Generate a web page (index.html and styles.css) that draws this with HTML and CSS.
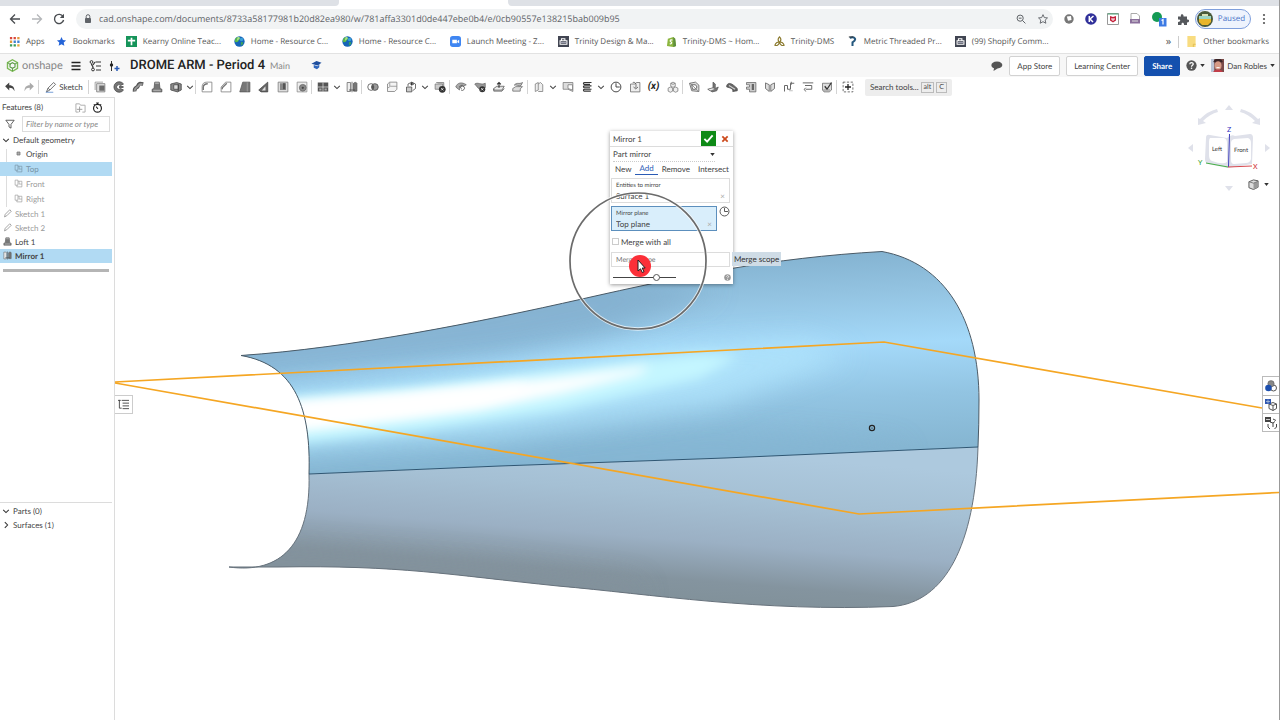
FILE: index.html
```html
<!DOCTYPE html>
<html lang="en">
<head>
  <meta charset="UTF-8">
  <meta name="viewport" content="width=device-width, initial-scale=1.0">
  <title>DROME ARM - Period 4</title>
  <link rel="stylesheet" href="styles.css">
</head>
<body>

  <!-- Shared icons -->
  <svg class="sprite" aria-hidden="true">
    <symbol id="i-chev" viewBox="0 0 10 10"><path d="M1.500 3.500 5 7l3.500-3.500" fill="none" stroke="currentColor" stroke-width="1.300"/></symbol>
    <symbol id="i-caret" viewBox="0 0 6 4"><path d="M0 0h6L3 4z" fill="currentColor"/></symbol>
    <symbol id="i-undo" viewBox="0 0 16 16"><path d="M7 2v3.500c5 0 7 3 7 8C12.500 10.500 11 9 7 9v3.500L1.500 7z" fill="currentColor"/></symbol>
    <symbol id="i-pencil" viewBox="0 0 16 16"><path d="M2 14.500 4 9.500 11.500 2 14 4.500 6.500 12z M4 9.500 6.500 12" fill="#fff" stroke="currentColor"/><path d="M1 15h10" stroke="#4a7fc8"/></symbol>
    <symbol id="i-extrude" viewBox="0 0 16 16"><path d="M1.500 12V1.500H12" fill="none" stroke="#888"/><path d="M3.500 3.500h11v11h-11z" fill="#ddd" stroke="#777"/><path d="M7 6h7v7H7z" fill="#6b6b6b"/></symbol>
    <symbol id="i-revolve" viewBox="0 0 16 16"><path d="M14 4A7 7 0 1 0 14 12L10 10A3 3 0 1 1 10 6z" fill="#777" stroke="#444"/><path d="M8 8h6" stroke="#333" stroke-width="2"/></symbol>
    <symbol id="i-sweep" viewBox="0 0 16 16"><path d="M3.500 14C3 7 7 10 8 6.500S10 3 15 4" fill="none" stroke="#555" stroke-width="5"/><path d="M3.500 13C4 8 7 9 8.500 6.500S10 4 14 4.300" fill="none" stroke="#999" stroke-width="2.500"/></symbol>
    <symbol id="i-loft" viewBox="0 0 16 16"><path d="M5 1.500h6l1 8.500 2.500 1v3.500h-13V11L4 10z" fill="#777" stroke="#555"/><path d="M5.500 2h5v2h-5zM3 11.500h10v2H3z" fill="#aaa"/></symbol>
    <symbol id="i-thicken" viewBox="0 0 16 16"><path d="M1 4 9 2l6 2v8l-5 2.500L1 12z" fill="#888" stroke="#444"/><path d="M5 5h6v6H5z" fill="#ddd" stroke="#444"/><path d="M11 4.500v9" stroke="#333"/></symbol>
    <symbol id="i-fillet" viewBox="0 0 16 16"><path d="M1.500 14.500V7Q2 1.500 8 1.500h6.500v13z" fill="#fff" stroke="#777"/><path d="M3 12V8Q3.500 3.500 9 3.500" fill="none" stroke="#777" stroke-width="2"/></symbol>
    <symbol id="i-chamfer" viewBox="0 0 16 16"><path d="M1.500 14.500V8l6-6.500h7v13z" fill="#fff" stroke="#777"/><path d="M3 11V9l6-6" fill="none" stroke="#777" stroke-width="2"/></symbol>
    <symbol id="i-draft" viewBox="0 0 16 16"><path d="M5 1.500h9.500v13H1z" fill="#777" stroke="#555"/><path d="M11 2v12" stroke="#aaa"/></symbol>
    <symbol id="i-rib" viewBox="0 0 16 16"><path d="M1 12 13 1.500v13H4z" fill="#666" stroke="#444"/><path d="M5 12.500 10 7v5.500z" fill="#ddd"/></symbol>
    <symbol id="i-shell" viewBox="0 0 16 16"><path d="M1.500 1.500h13v13h-13z" fill="#ddd" stroke="#777"/><path d="M4 3h8v9H4z" fill="#888"/><path d="M8 3h3v8H8z" fill="#555"/></symbol>
    <symbol id="i-hole" viewBox="0 0 16 16"><path d="M1.500 1.500h13v13h-13z" fill="#eee" stroke="#888"/><circle cx="9" cy="9" r="4.500" fill="#888" stroke="#666"/><circle cx="9" cy="9" r="1.500" fill="#444"/></symbol>
    <symbol id="i-pattern" viewBox="0 0 16 16"><path d="M1 2h14v12H1z" fill="#555"/><path d="M8 2v12M1 8h14" stroke="#ddd"/><path d="M3 10h3v2.500H3zM10 10h3v2.500h-3z" fill="#aaa"/></symbol>
    <symbol id="i-mirror" viewBox="0 0 16 16"><path d="M1.500 2H6v12H1.500z" fill="#eee" stroke="#666"/><path d="M10 3c2-2 4-1 4.500 0v10.500H10z" fill="#777" stroke="#555"/><path d="M8 1v14" stroke="#444"/><path d="M4 12h8" stroke="#444"/></symbol>
    <symbol id="i-boolean" viewBox="0 0 16 16"><circle cx="5.500" cy="8" r="4.500" fill="#fff" stroke="#444"/><circle cx="10.500" cy="8" r="4.500" fill="#999" stroke="#444"/><path d="M8 4.500a4.500 4.500 0 0 1 0 7 4.500 4.500 0 0 1 0-7z" fill="#555"/></symbol>
    <symbol id="i-split" viewBox="0 0 16 16"><path d="M2 4 5 1.500h9.500V11l-3 3H2z" fill="#f4f4f4" stroke="#777"/><path d="M2 9.500 6 7h8.500M5 2v5" fill="none" stroke="#888"/></symbol>
    <symbol id="i-transform" viewBox="0 0 16 16"><path d="M2 8h7v6.500H2z" fill="#ccc" stroke="#444"/><path d="M4 7V4l5-2.500L14 4v6l-4 3" fill="none" stroke="#444"/><path d="M9 1.500V6M7 4h5" stroke="#222" stroke-width="1.500"/></symbol>
    <symbol id="i-delete" viewBox="0 0 16 16"><path d="M1.500 4h10v7h-10zM3 2h10v7" fill="#ccc" stroke="#777"/><circle cx="11" cy="11" r="4.500" fill="#333"/><path d="m9.500 9.500 3 3m0-3-3 3" stroke="#fff"/></symbol>
    <symbol id="i-modfillet" viewBox="0 0 16 16"><path d="M1 8C3 2 9 1 15 5l-4 2c-3-1-5 1-5 5z" fill="#aaa" stroke="#666"/><path d="M8 12a3 3 0 1 0 0-5M9 5l-3 3 3 2" fill="none" stroke="#444"/></symbol>
    <symbol id="i-delface" viewBox="0 0 16 16"><path d="M1 4c4-3 9 2 14-1v6L6 10z" fill="#999" stroke="#666"/><circle cx="11" cy="11" r="4" fill="#333"/><path d="m9.500 9.500 3 3m0-3-3 3" stroke="#fff"/></symbol>
    <symbol id="i-moveface" viewBox="0 0 16 16"><path d="M1 10 5 7h10l-3 5H1zM1 10v3.500h11L15 10" fill="#ddd" stroke="#555"/><path d="M8 9V2M5.500 4.500 8 2l2.500 2.500" fill="none" stroke="#333" stroke-width="1.500"/></symbol>
    <symbol id="i-replace" viewBox="0 0 16 16"><path d="M1 13.500V10l4-2.500h9l-3 3v3z" fill="#ddd" stroke="#666"/><path d="M3 5.500C7 1 9 5 14 2l-2 4C9 8 6 4 3 5.500z" fill="#bbb" stroke="#666"/></symbol>
    <symbol id="i-plane" viewBox="0 0 16 16"><path d="M3 14V4l4-2v10zM7 4l3-2 3 3v9H7" fill="#eee" stroke="#777"/></symbol>
    <symbol id="i-frame" viewBox="0 0 16 16"><path d="M1.500 2h13v12L8 11H1.500z" fill="#ddd" stroke="#777"/><path d="M8 5h6v7l-6-2z" fill="#fff" stroke="#777"/></symbol>
    <symbol id="i-helix" viewBox="0 0 16 16"><path d="M14 2H5Q2 2.500 4 4.500h8M14 6.500H5Q2 7 4 9h8M14 11H5Q2 11.500 4 13.500h9" fill="none" stroke="#333" stroke-width="1.500"/></symbol>
    <symbol id="i-clock" viewBox="0 0 16 16"><circle cx="8" cy="8" r="6.500" fill="#fff" stroke="currentColor" stroke-width="1.300"/><path d="M8 3v5h5" fill="none" stroke="currentColor" stroke-width="1.300"/></symbol>
    <symbol id="i-import" viewBox="0 0 16 16"><path d="M2 4h6l2-2h4.500v12.500H2z" fill="#eee" stroke="#666"/><path d="M5 2c4-1 5 2 4 7M6 8l3 2.500L12 8" fill="none" stroke="#444"/></symbol>
    <symbol id="i-composite" viewBox="0 0 16 16"><path d="M8 1.500 11 3v4L8 8.500 5 7V3zM4.500 8l3 1.500v4l-3 1.500-3-1.500v-4zM11.500 8l3 1.500v4l-3 1.500-3-1.500v-4z" fill="#eee" stroke="#777"/><path d="m5 3 3 1.500L11 3" fill="none" stroke="#777"/></symbol>
    <symbol id="i-sheet" viewBox="0 0 16 16"><path d="M2 3 10 1.500l4.500 4V14L5 13z" fill="#ddd" stroke="#555"/><path d="M5 5h5l2 3-2 3H6z" fill="#fff" stroke="#444"/><path d="m3 3 10 10" stroke="#777"/></symbol>
    <symbol id="i-flange" viewBox="0 0 16 16"><path d="M8 1.500 11 4v6l4-2-2 5-6 1.500L1 11l7-2z" fill="#777" stroke="#555"/><path d="m2 11 6-1.500 2 1-5 2z" fill="#eee"/></symbol>
    <symbol id="i-hem" viewBox="0 0 16 16"><path d="M1 6c2-5 7-3 14 4v3L9 14C10 10 5 9 1 8z" fill="#666" stroke="#444"/><path d="m4 6 8 5" stroke="#ccc" stroke-width="1.500"/></symbol>
    <symbol id="i-tab" viewBox="0 0 16 16"><path d="M2 2h12.500v12.500H6V11H2V8h4V5H2z" fill="#ccc" stroke="#666"/><path d="M9 4h3v8H9z" fill="#666"/></symbol>
    <symbol id="i-bend" viewBox="0 0 16 16"><path d="M2 2.500 7 5v9L2 10zM14 2.500 9 5v9l5-4z" fill="#ddd" stroke="#555"/></symbol>
    <symbol id="i-joint" viewBox="0 0 16 16"><path d="M2 14V6h4v5h4V3h5M11 1v4" fill="none" stroke="#666" stroke-width="1.300"/><path d="M8 13h5" stroke="#aaa"/></symbol>
    <symbol id="i-relief" viewBox="0 0 16 16"><path d="M1 2.500h14M4 6h9v5H5M5 9l-2 2 2 3" fill="none" stroke="#666" stroke-width="1.300"/></symbol>
    <symbol id="i-finish" viewBox="0 0 16 16"><path d="M2 3h12v9l-3 2.500H4L2 12z" fill="#ddd" stroke="#666"/><path d="m5 7 3 4 6-9" fill="none" stroke="#333" stroke-width="1.700"/><path d="M3 12h9" stroke="#777"/></symbol>
    <symbol id="i-add" viewBox="0 0 16 16"><path d="M1.500 1.500h13v13h-13z" fill="none" stroke="#444" stroke-dasharray="3 2"/><path d="M8 4v8M4 8h8" stroke="#222" stroke-width="1.700"/></symbol>
    <symbol id="i-planeface" viewBox="0 0 16 16"><path d="M2 2h5v9H2zM7 4h7v10H5v-3M9 4v5h5" fill="none" stroke="currentColor" stroke-width="1.200"/></symbol>
    <symbol id="i-globe" viewBox="0 0 16 16"><circle cx="8" cy="8" r="7.500" fill="#1565b8"/><path d="M4 2c4-2 6 1 4 3s-2 4-5 4C0 8 1 4 4 2z" fill="#58b947"/><path d="M5 2c2-1 4 0 3 2s-3 2-4 3z" fill="#a6dc8c"/><path d="M10 9c3-1 4 0 3 3l-3 2z" fill="#3aa060"/><circle cx="11" cy="5" r="2.500" fill="#3aa0d8"/></symbol>
    <symbol id="i-shop" viewBox="0 0 16 16"><path d="M0 0h16v16H0z" fill="#414552"/><path d="M3 7h10v5H3zM5 7V4h5v3" fill="none" stroke="#fff" stroke-width="1.500"/><path d="M4 9.500h8" stroke="#ccd"/></symbol>
    <symbol id="i-help" viewBox="0 0 16 16"><circle cx="8" cy="8" r="7.500" fill="currentColor"/><path d="M5.500 6.200C5.500 2.800 10.700 3 10.500 6 10.400 7.600 8 7.800 8 9.700" fill="none" stroke="#fff" stroke-width="1.800"/><circle cx="8" cy="12" r="1.200" fill="#fff"/></symbol>
  </svg>

  <!-- Browser chrome -->
  <div class="tabstrip"><div class="tabstrip-rest"></div><div class="tabstrip-active"></div><div class="tabstrip-rest tabstrip-end"></div></div>

  <div class="navbar">
    <button class="nav-btn" aria-label="Back"><svg viewBox="0 0 12 12"><path d="M11 6H1.500M6 1.500 1.500 6 6 10.500" fill="none" stroke="#4a4d51" stroke-width="1.300"/></svg></button>
    <button class="nav-btn" aria-label="Forward"><svg viewBox="0 0 12 12"><path d="M1 6h9.500M6 1.500 10.500 6 6 10.500" fill="none" stroke="#b4b6b9" stroke-width="1.300"/></svg></button>
    <button class="nav-btn" aria-label="Reload"><svg viewBox="0 0 12 12"><path d="M10 3.500A4.600 4.600 0 1 0 10.600 7" fill="none" stroke="#4a4d51" stroke-width="1.400"/><path d="M11 .8V5H6.800z" fill="#4a4d51"/></svg></button>
    <div class="omnibox">
      <svg class="lock" viewBox="0 0 8 10"><path d="M1.500 4.500h5v4h-5z" fill="#5f6368" stroke="#5f6368"/><path d="M2.200 4V2.500a1.800 1.800 0 0 1 3.600 0V4" fill="none" stroke="#5f6368"/></svg>
      <input class="url" aria-label="Address" value="cad.onshape.com/documents/8733a58177981b20d82ea980/w/781affa3301d0de447ebe0b4/e/0cb90557e138215bab009b95">
      <svg class="icon-10" viewBox="0 0 12 12"><circle cx="5" cy="5" r="3.700" fill="none" stroke="#5f6368" stroke-width="1.200"/><path d="m7.800 7.800 3.500 3.500M3.300 5h3.400" stroke="#5f6368" stroke-width="1.200"/></svg>
      <svg class="icon-10" viewBox="0 0 12 12"><path d="m6 .8 1.600 3.500 3.800.4-2.800 2.600.8 3.800L6 9.200l-3.400 1.900.8-3.800L.6 4.700l3.800-.4z" fill="none" stroke="#5f6368" stroke-width="1.100"/></svg>
    </div>
    <div class="extensions">
      <svg class="icon-12" viewBox="0 0 12 12"><circle cx="6" cy="6" r="4.700" fill="#777"/><path d="M3.800 3.500 8 3l.5 4-3.500.8z" fill="#fff"/></svg>
      <svg class="icon-12" viewBox="0 0 12 12"><circle cx="6" cy="6" r="5.800" fill="#30309a"/><path d="M4.300 3v6M8.500 3 5 6l3 3" fill="none" stroke="#fff" stroke-width="1.500"/></svg>
      <svg class="icon-12" viewBox="0 0 12 12"><path d="M.5.500h11v11H.5z" fill="#fff" stroke="#999"/><path d="M.5 1h11" stroke="#4ca878"/><path d="m3 3 3 1 3-1v4.500L6 9.500l-3-2z" fill="#c3213a"/><path d="M5 5v2h2V5" fill="none" stroke="#fff"/></svg>
      <svg class="icon-12" viewBox="0 0 12 12"><path d="M2 .5h6l2.500 2.500v5H2z" fill="#fff" stroke="#aaa"/><path d="M1 6h10v4.500H1z" fill="#8b6f9c"/><path d="M3 8h6" stroke="#ddd"/></svg>
      <svg class="icon-16" viewBox="0 0 16 16"><circle cx="6" cy="6" r="5" fill="#149a55"/><path d="M8 7h7.500v8.500H8z" fill="#3c7ae4"/><path d="m10.500 9.500 1.500-1v5" fill="none" stroke="#fff" stroke-width="1.200"/></svg>
      <svg class="icon-12" viewBox="0 0 12 12"><path d="M1 3.500h3C3 .5 7 .5 6.500 3.500H10v3c3-.5 3 3 0 3V12H7c.3-3-3-3-2.500 0H1V9c3 0 3-3 0-2.500z" fill="#55585c"/></svg>
    </div>
    <button class="profile">
      <svg viewBox="0 0 16 16"><circle cx="8" cy="8" r="8" fill="#4a5a3a"/><path d="M2 7h12v4l-3 3H5l-3-3z" fill="#e8b52c"/><path d="M2 5h12v3H2z" fill="#9ad3c4"/><path d="M5 3h6v2H5z" fill="#d7dfb5"/></svg>
      Paused
    </button>
    <button class="dots" aria-label="Menu"><svg viewBox="0 0 4 12"><circle cx="2" cy="2" r="1.100"/><circle cx="2" cy="6" r="1.100"/><circle cx="2" cy="10" r="1.100"/></svg></button>
  </div>

  <nav class="bookmarks">
    <a href="#"><svg viewBox="0 0 12 12"><path d="M1 1h2.500v2.500H1zM5 1h2.500v2.500H5z" fill="#d9473a"/><path d="M9 1h2.500v2.500H9zM1 5h2.500v2.500H1z" fill="#e2973a"/><path d="M5 5h2.500v2.500H5zM9 5h2.500v2.500H9z" fill="#4080d0"/><path d="M1 9h2.500v2.500H1zM5 9h2.500v2.500H5z" fill="#3a9c5a"/><path d="M9 9h2.500v2.500H9z" fill="#e3a83a"/></svg>Apps</a>
    <a href="#"><svg viewBox="0 0 12 12"><path d="m6 1.200 1.500 3.200 3.500.4-2.600 2.400.7 3.500L6 9 2.900 10.700l.7-3.500L1 4.800l3.500-.4z" fill="#2464d8"/></svg>Bookmarks</a>
    <a href="#" class="long"><svg viewBox="0 0 12 12"><path d="M0 0h12v12H0z" fill="#16945a"/><path d="M6 2v8M2 5h8" stroke="#fff" stroke-width="1.800"/></svg>Kearny Online Teac...</a>
    <a href="#" class="long"><svg><use href="#i-globe"/></svg>Home - Resource C...</a>
    <a href="#" class="long"><svg><use href="#i-globe"/></svg>Home - Resource C...</a>
    <a href="#" class="long"><svg viewBox="0 0 12 12"><rect width="12" height="12" rx="3" fill="#3f86f2"/><path d="M2.500 4h5v4h-5zM8 5.500 10 4v4L8 6.800z" fill="#fff"/></svg>Launch Meeting - Z...</a>
    <a href="#" class="long"><svg><use href="#i-shop"/></svg>Trinity Design &amp; Ma...</a>
    <a href="#" class="long"><svg viewBox="0 0 12 12"><path d="m2 3 6-2 2 2 1 8-3 1-7-1z" fill="#8cb63f"/><path d="m8 1 2 2 1 8-3 1z" fill="#5e8e3e"/><path d="M7 4.500C4 3.500 4 6 5.500 6.500S6 9 4 8.500" fill="none" stroke="#fff" stroke-width="1.200"/></svg>Trinity-DMS ~ Hom...</a>
    <a href="#" class="mid"><svg viewBox="0 0 12 12"><path d="M6 1c2 2 2 4 0 6-2-2-2-4 0-6zM1 10c1-3 3-4 5-3-1 3-3 4-5 3zM11 10c-1-3-3-4-5-3 1 3 3 4 5 3z" fill="none" stroke="#8b7a2e" stroke-width="1.300"/></svg>Trinity-DMS</a>
    <a href="#" class="long"><svg viewBox="0 0 12 12"><path d="M3 2c6-2 8 2 3 5v4" fill="none" stroke="#25587e" stroke-width="2.200"/><path d="M2 1h5" stroke="#333"/></svg>Metric Threaded Pr...</a>
    <a href="#" class="long"><svg><use href="#i-shop"/></svg>(99) Shopify Comm...</a>
    <span class="more">»</span>
    <a href="#" class="other"><svg viewBox="0 0 12 12"><path d="M1.500 0h9v12h-9z" fill="#f8dc80"/><path d="M8 12V9h2.500" fill="none" stroke="#e0bd50"/></svg>Other bookmarks</a>
  </nav>

  <!-- Document header -->
  <header class="doc-header">
    <a class="brand" href="#"><svg viewBox="0 0 14 14"><path d="m7 .8 5.400 3.100v6.200L7 13.200l-5.400-3.100V3.900z" fill="none" stroke="#7dba57" stroke-width="1.500"/><path d="m7 4 2.700 1.500v3L7 10 4.300 8.500v-3z" fill="none" stroke="#5a9a44" stroke-width="1.200"/><path d="M1.600 4 5 6M7 13v-3m5.400-6L9.500 5.500" stroke="#5a9a44"/></svg>onshape</a>
    <button class="head-btn" aria-label="Menu"><svg viewBox="0 0 12 12"><path d="M1.500 2.500h9M1.500 6h9M1.500 9.500h9" stroke="#222" stroke-width="1.400"/></svg></button>
    <button class="head-btn" aria-label="Versions"><svg viewBox="0 0 12 12"><circle cx="2.500" cy="2" r="1.400" fill="none" stroke="#333"/><circle cx="4" cy="9.500" r="1.400" fill="none" stroke="#333"/><path d="M2.500 4c0 2 1.500 1 1.500 4M4 5l2-3M6.500 2H12M7 6h5M7 10h5" fill="none" stroke="#333" stroke-width="1.200"/></svg></button>
    <button class="head-btn" aria-label="Insert"><svg viewBox="0 0 12 12"><path d="M3.500 1v10" stroke="#333"/><circle cx="3.500" cy="5" r="1.700" fill="#222"/><path d="M9 6v5M6.500 8.500h5" stroke="#2a5bb5" stroke-width="1.500"/></svg></button>
    <h1>DROME ARM - Period 4</h1>
    <span class="branch">Main</span>
    <svg class="edu" viewBox="0 0 12 12"><path d="M.5 4 6 1l5.500 2L7 6z" fill="#1f4f9f"/><path d="M3 5.500v3L6.500 10 9 8V5L7 6.800z" fill="#2f66bd"/><path d="M3.500 3.500 9 4.500" stroke="#1f4f9f"/></svg>
    <div class="head-right">
      <svg class="icon-12" viewBox="0 0 12 12"><path d="M6 1.500c7 0 7 7 .5 7L2.500 11 3 8.200C-1.500 6.500 0 1.500 6 1.500z" fill="#555"/></svg>
      <button class="btn">App Store</button>
      <button class="btn">Learning Center</button>
      <button class="btn btn-primary">Share</button>
      <button class="user"><svg class="icon-11 grey"><use href="#i-help"/></svg><svg class="caret"><use href="#i-caret"/></svg></button>
      <button class="user"><svg class="avatar" viewBox="0 0 12 12"><path d="M0 0h12v12H0z" fill="#7a4a48"/><path d="M0 0h3v12H0z" fill="#b9c4d6"/><ellipse cx="6.500" cy="6" rx="3.200" ry="4" fill="#d59a86"/><path d="M3 3c1-3 6-3 7 0" stroke="#3a2527" stroke-width="2" fill="none"/><path d="M2 12c2-3 7-3 9 0z" fill="#c23d48"/><path d="M5 8h3" stroke="#fff"/></svg>Dan Robles<svg class="caret"><use href="#i-caret"/></svg></button>
    </div>
  </header>

  <div class="toolbar">
    <button class="tool" aria-label="Undo"><svg><use href="#i-undo"/></svg></button>
    <button class="tool redo" aria-label="Redo"><svg><use href="#i-undo"/></svg></button>
    <span class="sep"></span>
    <button class="tool-sketch"><svg><use href="#i-pencil"/></svg>Sketch</button>
    <span class="sep"></span>
    <button class="tool" aria-label="Extrude"><svg><use href="#i-extrude"/></svg></button>
    <button class="tool" aria-label="Revolve"><svg><use href="#i-revolve"/></svg></button>
    <button class="tool" aria-label="Sweep"><svg><use href="#i-sweep"/></svg></button>
    <button class="tool" aria-label="Loft"><svg><use href="#i-loft"/></svg></button>
    <button class="tool" aria-label="Thicken"><svg><use href="#i-thicken"/></svg></button>
    <button class="drop" aria-label="More solids"><svg><use href="#i-chev"/></svg></button>
    <span class="sep"></span>
    <button class="tool" aria-label="Fillet"><svg><use href="#i-fillet"/></svg></button>
    <button class="tool" aria-label="Chamfer"><svg><use href="#i-chamfer"/></svg></button>
    <button class="tool" aria-label="Draft"><svg><use href="#i-draft"/></svg></button>
    <button class="tool" aria-label="Rib"><svg><use href="#i-rib"/></svg></button>
    <button class="tool" aria-label="Shell"><svg><use href="#i-shell"/></svg></button>
    <button class="tool" aria-label="Hole"><svg><use href="#i-hole"/></svg></button>
    <span class="sep"></span>
    <button class="tool" aria-label="Pattern"><svg><use href="#i-pattern"/></svg></button>
    <button class="drop" aria-label="More patterns"><svg><use href="#i-chev"/></svg></button>
    <button class="tool" aria-label="Mirror"><svg><use href="#i-mirror"/></svg></button>
    <span class="sep"></span>
    <button class="tool" aria-label="Boolean"><svg><use href="#i-boolean"/></svg></button>
    <button class="tool" aria-label="Split"><svg><use href="#i-split"/></svg></button>
    <button class="tool" aria-label="Transform"><svg><use href="#i-transform"/></svg></button>
    <button class="drop" aria-label="More transforms"><svg><use href="#i-chev"/></svg></button>
    <button class="tool" aria-label="Delete part"><svg><use href="#i-delete"/></svg></button>
    <span class="sep"></span>
    <button class="tool" aria-label="Modify fillet"><svg><use href="#i-modfillet"/></svg></button>
    <button class="tool" aria-label="Delete face"><svg><use href="#i-delface"/></svg></button>
    <button class="tool" aria-label="Move face"><svg><use href="#i-moveface"/></svg></button>
    <button class="tool" aria-label="Replace face"><svg><use href="#i-replace"/></svg></button>
    <span class="sep"></span>
    <button class="tool" aria-label="Surface"><svg><use href="#i-plane"/></svg></button>
    <button class="drop" aria-label="More surfaces"><svg><use href="#i-chev"/></svg></button>
    <button class="tool" aria-label="Plane"><svg><use href="#i-frame"/></svg></button>
    <button class="tool" aria-label="Helix"><svg><use href="#i-helix"/></svg></button>
    <button class="drop" aria-label="More curves"><svg><use href="#i-chev"/></svg></button>
    <button class="tool" aria-label="Mate connector"><svg><use href="#i-clock"/></svg></button>
    <button class="tool" aria-label="Derived"><svg><use href="#i-import"/></svg></button>
    <button class="tool variable">(x)</button>
    <button class="tool" aria-label="Composite part"><svg><use href="#i-composite"/></svg></button>
    <span class="sep"></span>
    <button class="tool" aria-label="Sheet metal model"><svg><use href="#i-sheet"/></svg></button>
    <button class="tool" aria-label="Flange"><svg><use href="#i-flange"/></svg></button>
    <button class="tool" aria-label="Hem"><svg><use href="#i-hem"/></svg></button>
    <button class="tool" aria-label="Tab"><svg><use href="#i-tab"/></svg></button>
    <button class="tool" aria-label="Bend"><svg><use href="#i-bend"/></svg></button>
    <button class="tool" aria-label="Make joint"><svg><use href="#i-joint"/></svg></button>
    <button class="tool" aria-label="Corner"><svg><use href="#i-relief"/></svg></button>
    <button class="tool" aria-label="Finish sheet metal"><svg><use href="#i-finish"/></svg></button>
    <span class="sep"></span>
    <button class="tool" aria-label="Custom features"><svg><use href="#i-add"/></svg></button>
    <button class="search-tools">Search tools... <kbd>alt</kbd><kbd>C</kbd></button>
  </div>

  <main class="workspace">
    <aside class="sidebar">
      <div class="features">
        <div class="panel-title">Features (8)
          <svg class="icon-11 folder" viewBox="0 0 12 12"><path d="M4 11H1V2h4l1 1.500h5V11H8" fill="none" stroke="#aaa"/><path d="M5 5v6M2 8h6" stroke="#999"/></svg>
          <svg class="icon-11" viewBox="0 0 12 12"><circle cx="6" cy="6.800" r="4.300" fill="none" stroke="#222" stroke-width="1.300"/><path d="M4.500 1h3M6 1v2M4.500 5 6.500 7.500M2 2.500l1 1m7-1-1 1" stroke="#222" stroke-width="1.100"/></svg>
        </div>
        <div class="filter">
          <svg class="icon-10" viewBox="0 0 12 12"><path d="M1 1.500h10L7.200 6.500V11L4.800 9.500v-3z" fill="none" stroke="#444"/></svg>
          <input type="text" aria-label="Filter features" placeholder="Filter by name or type">
        </div>
        <ul class="tree">
          <li><svg class="arrow"><use href="#i-chev"/></svg>Default geometry
            <ul class="children">
              <li><svg viewBox="0 0 12 12"><path d="M4 4h4v4H4z" fill="#aaa" stroke="#777"/></svg>Origin</li>
              <li class="dim selected"><svg><use href="#i-planeface"/></svg>Top</li>
              <li class="dim"><svg><use href="#i-planeface"/></svg>Front</li>
              <li class="dim"><svg><use href="#i-planeface"/></svg>Right</li>
            </ul>
          </li>
          <li class="feature dim"><svg viewBox="0 0 12 12"><path d="m2 10.500 1-3.500 6-6 2 2-6 6z" fill="none" stroke="#888"/></svg>Sketch 1</li>
          <li class="feature dim"><svg viewBox="0 0 12 12"><path d="m2 10.500 1-3.500 6-6 2 2-6 6z" fill="none" stroke="#888"/></svg>Sketch 2</li>
          <li class="feature"><svg><use href="#i-loft"/></svg>Loft 1</li>
          <li class="feature selected active"><svg><use href="#i-mirror"/></svg>Mirror 1</li>
        </ul>
        <div class="rollback"></div>
      </div>
      <ul class="tree parts">
        <li><svg class="arrow"><use href="#i-chev"/></svg>Parts (0)</li>
        <li><svg class="arrow closed"><use href="#i-chev"/></svg>Surfaces (1)</li>
      </ul>
    </aside>

    <section class="canvas">
      <svg class="model" viewBox="115 97 1164 623" preserveAspectRatio="xMinYMin slice">
        <defs>
          <linearGradient id="upper" gradientUnits="userSpaceOnUse" x1="790" y1="252" x2="800" y2="452">
            <stop offset="0" stop-color="#83b2d0"/>
            <stop offset=".22" stop-color="#93c3e1"/>
            <stop offset=".48" stop-color="#a4d9f9"/>
            <stop offset=".74" stop-color="#92c4e2"/>
            <stop offset="1" stop-color="#86b6d2"/>
          </linearGradient>
          <linearGradient id="lower" gradientUnits="userSpaceOnUse" x1="713" y1="452" x2="701" y2="602">
            <stop offset="0" stop-color="#adc9de"/>
            <stop offset=".3" stop-color="#a5c0d4"/>
            <stop offset=".6" stop-color="#9bb0c4"/>
            <stop offset=".86" stop-color="#84949f"/>
            <stop offset="1" stop-color="#81919a"/>
          </linearGradient>
          <clipPath id="upperClip"><path d="M241 355.500C350 348 480 322 582 299S770 258 882 251.500C945 263 979 320 979 400Q979 425 978 447L725 458 500 466 309 474C311 410 296 365 241 355.500z"/></clipPath>
          <clipPath id="lowerClip"><path d="M309 474 500 466 725 458 978 447C975 545 945 602 893 606.500 760 612 650 594 558 586 450 575 400 565 278 567L229 567C280 574 311 545 309 474z"/></clipPath>
          <filter id="soft" x="-20%" y="-50%" width="140%" height="200%"><feGaussianBlur stdDeviation="6"/></filter>
          <filter id="softer" x="-20%" y="-50%" width="140%" height="200%"><feGaussianBlur stdDeviation="14"/></filter>
        </defs>

        <!-- mirrored half -->
        <g clip-path="url(#lowerClip)">
          <path d="M220 440h770v180H220z" fill="url(#lower)"/>
          <path d="M220 546 310 550 480 564 640 584 640 610H220z" fill="#83929c" opacity=".9" filter="url(#softer)"/>
        </g>
        <path d="M309 474C311 545 280 574 229 567L278 567C400 565 450 575 558 586 650 594 760 612 893 606.500 945 602 975 545 978 447" fill="none" stroke="#67727c"/>

        <!-- lofted half -->
        <g clip-path="url(#upperClip)">
          <path d="M220 240h770v240H220z" fill="url(#upper)"/>
          <path d="M220 330 600 270 720 290 600 338 500 358 240 388z" fill="#82aecd" opacity=".8" filter="url(#softer)"/>
          <path d="M250 455 520 440 720 430 900 446V480H250z" fill="#84b5d3" opacity=".7" filter="url(#softer)"/>
          <path d="M270 396 420 382 620 354 800 340 850 356 720 404 500 436 270 452z" fill="#b0e4fc" opacity=".85" filter="url(#softer)"/>
          <path d="M270 400 420 387 560 370 700 354 740 356 700 378 560 410 420 430 270 446z" fill="#c4f6ff" filter="url(#soft)"/>
          <path d="M270 404 400 393 560 377 650 366 640 374 560 394 480 410 400 420 270 434z" fill="#fff" filter="url(#soft)"/>
          <path d="M270 406 400 397 520 384 530 390 480 403 400 414 270 428z" fill="#fff" filter="url(#soft)"/>
        </g>
        <path d="M241 355.500C350 348 480 322 582 299S770 258 882 251.500C945 263 979 320 979 400Q979 425 978 447" fill="none" stroke="#4a5a66"/>
        <path d="M241 355.500C296 365 311 410 309 474" fill="none" stroke="#4a5a66"/>
        <path d="M309 474 500 466 725 458 978 447" fill="none" stroke="#2f5672"/>

        <!-- selected plane -->
        <path d="M1279 492.500 859 514 115 383M115 382 884 342 1262 408" fill="none" stroke="#f5a623" stroke-width="1.700"/>
        <circle cx="872" cy="428" r="2.600" fill="none" stroke="#222" stroke-width="1.200"/><circle cx="872" cy="428" r=".6"/>
      </svg>

      <button class="panel-toggle" aria-label="Feature list"><svg viewBox="0 0 12 12"><path d="M0 1.500h3M1.500 1v9H4M4 1.500h8M5 4.500h7M5 7.500h7M5 10.500h7" fill="none" stroke="#444"/></svg></button>

      <svg class="viewcube" viewBox="0 0 94 94">
        <g fill="#dfe1ea">
          <path d="m44 4 4 5h-8zM44 90l4-5h-8zM3 47l5-4v8zM85 47l-5-4v8z"/>
          <path d="M13 24v-7l2 1q8-8 17-10l1 3q-8 2-15 9l3 2z"/><path d="M75 24v-7l-2 1q-8-8-17-10l-1 3q8 2 15 9l-3 2z"/>
          <path d="M21 37q0-4 4-3l17 3q4-4 8-2l15-2q3 0 3 4l-1 26-24 4-20-4q-3-1-3-5z"/>
        </g>
        <path d="M25 37h14q3 1 3 5v19q-4 3-15-1-3-1-3-6V41q0-3 1-4zM49 38l14-1q3 1 3 5v16q-1 4-5 4l-12 1q-3 0-3-4V42q0-3 3-4z" fill="#fff"/>
        <path d="M43.500 66 44.500 33" stroke="#3e3ebd"/><path d="m43 66-22-4" stroke="#45b045"/><path d="m43 66 24-1" stroke="#d84a50"/>
        <text x="42" y="31" fill="#3434c0">Z</text><text x="13" y="64" fill="#2c9c2c">Y</text><text x="68" y="68" fill="#cf3038">X</text>
        <text class="face" x="27" y="50">Left</text><text class="face" x="49" y="51">Front</text>
      </svg>
      <button class="view-menu" aria-label="View options"><svg class="icon-11" viewBox="0 0 12 12"><path d="m1 3 5-2 5 1v7l-5 2.500-5-2z" fill="#ddd" stroke="#555"/><path d="m6 4.500 5-2V9l-5 2.500z" fill="#999"/><path d="m1 3 5 1.500 5-2" fill="none" stroke="#777"/></svg><svg class="caret"><use href="#i-caret"/></svg></button>

      <div class="side-tools">
        <button aria-label="Appearance"><svg viewBox="0 0 12 12"><circle cx="8.500" cy="8" r="3" fill="#fff" stroke="#555"/><circle cx="6" cy="3.800" r="3.200" fill="#888" stroke="#555" stroke-width=".5"/><circle cx="3.500" cy="8" r="3.300" fill="#1d4fae"/></svg></button>
        <button aria-label="Configurations"><svg viewBox="0 0 12 12"><path d="m4 5 4-1.500L11.500 5v4.500L8 11.500l-4-2zM4 5l4 1.500L11.500 5M8 6.500v5" fill="#fff" stroke="#555"/><path d="M0 0h6v5H0z" fill="#2f56b0"/><path d="M1 2.500h4M3 .5v4" stroke="#bcd" stroke-width=".7"/></svg></button>
        <button aria-label="Tables"><svg viewBox="0 0 12 12"><path d="M0 0h6v5H0z" fill="#444"/><path d="M1 2.500h4" stroke="#ccc"/><path d="m5 5 3 1 2-1.500M8 6v4M3 7v3l2 2M11.500 7v3l-2 2M8 2l3 1.500" fill="none" stroke="#444"/></svg></button>
      </div>

      <form class="dialog">
        <div class="dialog-head">
          <span>Mirror 1</span>
          <button type="button" class="ok" aria-label="Accept"><svg viewBox="0 0 12 12"><path d="m1.500 6.500 3 3 6-7" fill="none" stroke="#fff" stroke-width="2"/></svg></button>
          <button type="button" class="cancel" aria-label="Cancel"><svg viewBox="0 0 12 12"><path d="m2 2 8 8m0-8-8 8" stroke="#cc4a1c" stroke-width="2.600"/></svg></button>
        </div>
        <div class="dialog-type"><select aria-label="Mirror type"><option>Part mirror</option></select><svg class="caret"><use href="#i-caret"/></svg></div>
        <div class="dialog-tabs">
          <button type="button">New</button><button type="button" class="current">Add</button><button type="button">Remove</button><button type="button">Intersect</button>
        </div>
        <label class="field">Entities to mirror
          <span><input type="text" value="Surface 1"><i>×</i></span>
        </label>
        <div class="plane-row">
          <label class="field focused">Mirror plane
            <span><input type="text" value="Top plane"><i>×</i></span>
          </label>
          <svg class="icon-11"><use href="#i-clock"/></svg>
        </div>
        <label class="check"><input type="checkbox">Merge with all</label>
        <input type="text" class="scope" aria-label="Merge scope" placeholder="Merge scope">
        <div class="dialog-foot"><input type="range" aria-label="Opacity" value="71"><svg class="help"><use href="#i-help"/></svg></div>
      </form>
      <div class="tooltip">Merge scope</div>

      <svg class="pointer" viewBox="0 0 140 140">
        <circle cx="70" cy="70" r="68" fill="none" stroke="#fff" stroke-width="3.500" opacity=".7"/>
        <circle cx="70" cy="70" r="68" fill="none" stroke="#6b6b6b" stroke-width="1.700"/>
        <circle cx="72" cy="75" r="11" fill="#fb2f38"/>
        <path d="M70 69v11l2.500-2.200 1.800 3.700 1.700-.8-1.800-3.700h3z" fill="#fff" stroke="#222"/>
      </svg>
    </section>
  </main>
</body>
</html>
```
FILE: styles.css
```css
:root {
  --text: #444;
  --line: #dcdcdc;
  --select: #b1daf3;
  --ui: Lato, Roboto, sans-serif;
  --chrome: "Open Sans", "Noto Sans", sans-serif;
}

* { box-sizing: border-box; }

body {
  margin: 0;
  min-height: 100vh;
  display: flex;
  flex-direction: column;
  border-right: 1px solid #999;
  background: #fff;
  color: var(--text);
  font: 8px/12px var(--ui);
  text-rendering: geometricPrecision;
}

button, input, select {
  margin: 0;
  padding: 0;
  border: 0;
  background: none;
  color: inherit;
  font: inherit;
  text-rendering: inherit;
}
button { display: flex; align-items: center; justify-content: center; }
a { color: inherit; text-decoration: none; }
ul { margin: 0; padding: 0; list-style: none; }
svg { display: block; flex: none; }

.sprite { position: absolute; width: 0; height: 0; }
.icon-10 { width: 10px; height: 10px; }
.icon-11 { width: 11px; height: 11px; }
.icon-12 { width: 12px; height: 12px; }
.icon-16 { width: 16px; height: 16px; }
.caret { width: 5px; height: 3px; color: #333; }
.grey { color: #555; }

/* Browser */
.tabstrip { display: flex; height: 6px; background: #fff; }
.tabstrip-rest { flex: 339; background: #dee1e6; border-bottom-right-radius: 4px; }
.tabstrip-active { flex: 169; }
.tabstrip-end { flex: 771; border-radius: 0 0 0 4px; }

.navbar {
  display: flex;
  align-items: center;
  height: 26px;
  padding: 0 11px 0 4px;
  font-family: var(--chrome);
}
.nav-btn { width: 22px; height: 22px; }
.nav-btn svg { width: 12px; height: 12px; }
.omnibox {
  flex: 1;
  display: flex;
  align-items: center;
  gap: 12px;
  height: 20px;
  margin-left: 6px;
  padding: 0 5px 0 8px;
  border-radius: 10px;
  background: #f1f3f4;
}
.lock { width: 8px; height: 10px; }
.url {
  flex: 1;
  min-width: 0;
  margin-left: -5px;
  color: #5f6368;
  font-size: 9px;
}
.extensions { display: flex; align-items: center; gap: 10px; margin: 0 6px 0 10px; }
.profile {
  gap: 5px;
  width: 56px;
  height: 20px;
  padding-right: 4px;
  border: 1px solid #7f9fdc;
  border-radius: 10px;
  background: #eef3fd;
  color: #4a73c9;
  font-size: 8px;
}
.profile svg { width: 16px; height: 16px; }
.dots { width: 8px; margin-left: 9px; }
.dots svg { width: 4px; height: 12px; fill: #555; }

.bookmarks {
  display: flex;
  align-items: center;
  height: 22px;
  padding: 0 10px 2px 9px;
  border-bottom: 1px solid #e2e2e2;
  font-family: var(--chrome);
  color: #555;
  white-space: nowrap;
}
.bookmarks a { display: flex; align-items: center; gap: 6px; margin-right: 11px; }
.bookmarks a svg { width: 11px; height: 11px; }
.bookmarks .long { width: 97px; }
.bookmarks .mid { width: 62px; }
.more { margin-left: auto; padding-right: 7px; border-right: 1px solid #ccc; font-size: 11px; }
.bookmarks .other { margin: 0 0 0 7px; }

/* Document header */
.doc-header {
  display: flex;
  align-items: center;
  height: 23px;
  padding: 0 4px 0 6px;
  background: #f7f7f7;
}
.brand {
  display: flex;
  align-items: center;
  gap: 3px;
  width: 60px;
  color: #858585;
  font: 11px/14px var(--ui);
}
.brand svg { width: 13px; height: 13px; }
.head-btn { width: 19px; height: 16px; }
.head-btn svg { width: 12px; height: 12px; }
.doc-header h1 {
  margin: 0 5px 0 7px;
  color: #222;
  font-family: Roboto, sans-serif;
  font-size: 13px;
  font-weight: 500;
}
.branch { color: #888; font-size: 9px; }
.edu { width: 11px; height: 11px; margin-left: 21px; }
.head-right { display: flex; align-items: center; gap: 6px; margin-left: auto; }
.btn {
  height: 20px;
  padding: 0 7px;
  border: 1px solid #d2d2d2;
  border-radius: 2px;
  background: #fff;
}
.btn-primary { border-color: #1450ae; background: #1450ae; color: #fff; font-weight: 700; }
.user { gap: 3px; }
.avatar { width: 13px; height: 13px; }

/* Toolbar */
.toolbar { display: flex; align-items: center; height: 20px; }
.tool { width: 19px; height: 18px; }
.tool svg, .tool-sketch svg { width: 12px; height: 12px; }
.redo { color: #aaa; }
.redo svg { transform: scaleX(-1); }
.tool-sketch { gap: 2px; width: 48px; }
.drop { width: 10px; height: 18px; }
.drop svg { width: 8px; height: 8px; }
.sep { width: 1px; height: 14px; margin-right: 1px; background: #d4d4d4; }
.variable { color: #222; font: italic 700 10px/12px Roboto, sans-serif; }
.search-tools {
  height: 17px;
  margin-left: 8px;
  padding: 0 5px;
  border-radius: 2px;
  background: #ededed;
}
kbd {
  margin-left: 2px;
  padding: 0 2px;
  border: 1px solid #bbb;
  font: 7px/9px var(--ui);
}

/* Sidebar */
.workspace { flex: 1; display: flex; }
.sidebar {
  display: flex;
  flex-direction: column;
  width: 115px;
  border-top: 1px solid var(--line);
  border-right: 1px solid var(--line);
}
.features { height: 405px; margin-right: 2px; border-bottom: 1px solid var(--line); }
.panel-title { display: flex; align-items: center; height: 18px; padding: 0 9px 0 2px; }
.folder { margin-left: auto; margin-right: 6px; }
.filter { display: flex; align-items: center; gap: 7px; height: 16px; padding: 0 2px 0 5px; }
.filter input {
  flex: 1;
  min-width: 0;
  height: 16px;
  padding: 0 3px;
  border: 1px solid var(--line);
}
.filter input::placeholder { color: #888; font-style: italic; }

.tree { line-height: 14px; padding-top: 1px; }
.tree li { position: relative; }
.tree > li { padding-left: 13px; }
.tree svg { position: absolute; left: 3px; top: 2px; width: 9px; height: 9px; }
.tree .arrow { left: 2px; top: 3px; width: 8px; height: 8px; color: #333; }
.tree .closed { transform: rotate(-90deg); }
.children { display: grid; gap: 1px; margin-left: -13px; padding-bottom: 1px; }
.children::before {
  content: "";
  position: absolute;
  left: 6px;
  top: 16px;
  bottom: 0;
  border-left: 1px solid #ddd;
}
.children li { padding-left: 26px; }
.children svg { left: 14px; }
.tree > .feature { padding-left: 15px; }
.dim { color: #9b9b9b; }
.selected { background: var(--select); }
.children .selected { color: #7893a5; }
.active { font-weight: 700; }
.rollback { height: 3px; margin: 6px 3px; background: #b5b5b5; }

/* Model area */
.canvas { position: relative; flex: 1; overflow: hidden; }
.model { position: absolute; inset: 0; width: 100%; height: 100%; }
.panel-toggle {
  position: absolute;
  left: 0;
  top: 298px;
  width: 18px;
  height: 19px;
  border: 1px solid #ccc;
  border-left: 0;
  background: #fff;
}
.panel-toggle svg { width: 11px; height: 11px; }
.viewcube { position: absolute; right: 0; top: 4px; width: 94px; height: 94px; }
.viewcube text { font: 7px var(--ui); }
.viewcube .face { fill: #333; font-size: 6px; }
.view-menu { position: absolute; right: 10px; top: 82px; gap: 5px; }
.side-tools {
  position: absolute;
  right: 0;
  top: 279px;
  border: 1px solid #bbb;
  border-right: 0;
  background: #fff;
}
.side-tools button { width: 16px; height: 18px; }
.side-tools button + button { border-top: 1px solid #bbb; }
.side-tools svg { width: 12px; height: 12px; }

/* Feature dialog */
.dialog {
  position: absolute;
  left: 495px;
  top: 34px;
  width: 123px;
  background: #fff;
  box-shadow: 0 1px 4px rgba(0, 0, 0, 0.4);
}
.dialog-head { display: flex; align-items: center; height: 16px; border-bottom: 1px solid var(--line); }
.dialog-head span { flex: 1; padding-left: 3px; }
.ok { width: 15px; height: 15px; background: #0e8a16; }
.ok svg { width: 11px; height: 11px; }
.cancel { width: 17px; }
.cancel svg { width: 8px; height: 8px; }
.dialog-type { display: flex; align-items: center; height: 15px; margin: 0 18px 0 3px; border-bottom: 1px dotted #ccc; }
.dialog-type select { flex: 1; appearance: none; }
.dialog-tabs { display: flex; justify-content: space-between; height: 13px; padding: 0 6px 0 1px; }
.dialog-tabs button { padding: 0 4px; }
.dialog-tabs button:last-child { padding-right: 0; }
.dialog-tabs .current { border-bottom: 1px solid #2a5bb5; color: #2a5bb5; }
.field {
  display: block;
  height: 25px;
  margin: 3px 3px 3px 1px;
  padding: 1px 4px;
  border: 1px solid var(--line);
  font-size: 6px;
  line-height: 11px;
}
.field span { display: flex; font-size: 8px; }
.field input { flex: 1; min-width: 0; height: 11px; }
.field i { color: #aaa; font-style: normal; }
.plane-row { display: flex; gap: 1px; padding-right: 3px; }
.plane-row .field { flex: 1; min-width: 0; margin-top: 0; margin-right: 1px; }
.field.focused { border-color: #5c8fbd; background: #d9eefb; }
.check { display: flex; align-items: center; gap: 2px; height: 15px; padding-left: 2px; }
.check input {
  appearance: none;
  width: 7px;
  height: 7px;
  border: 1px solid #ccc;
}
.scope {
  display: block;
  width: 119px;
  height: 15px;
  margin: 3px 0 3px 1px;
  padding: 0 4px;
  border: 1px solid var(--line);
  font-size: 7px;
}
.scope::placeholder { color: #777; }
.dialog-foot { display: flex; align-items: center; justify-content: space-between; height: 14px; padding: 0 2px 0 3px; }
.dialog-foot input { appearance: none; width: 63px; height: 1px; background: #444; }
.dialog-foot input::-webkit-slider-thumb {
  appearance: none;
  width: 7px;
  height: 7px;
  border: 1px solid #555;
  border-radius: 50%;
  background: #fff;
}
.help { width: 7px; height: 7px; color: #999; }
.tooltip {
  position: absolute;
  left: 617px;
  top: 155px;
  padding: 1px 2px;
  background: #cfdce6;
  color: #333;
}
.pointer { position: absolute; left: 453px; top: 94px; width: 140px; height: 140px; pointer-events: none; }
```
